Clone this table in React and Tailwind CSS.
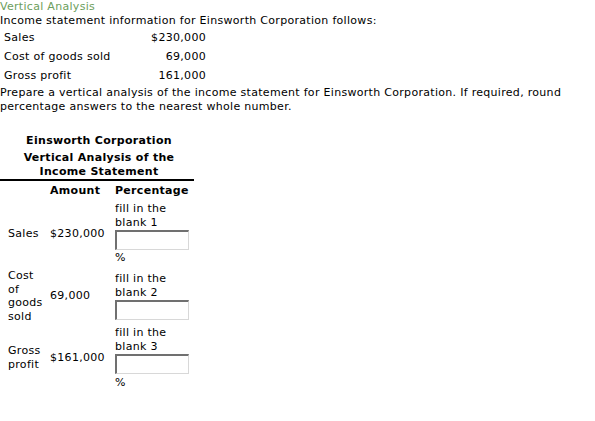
export default function App() {
  const font = { fontFamily: '"DejaVu Sans", Verdana, sans-serif' };
  const Input = () => (
    <div className="w-[74px] h-[20px] bg-white border border-t-[#707070] border-l-[#707070] border-b-[#d8d8d8] border-r-[#d8d8d8] border-t-2 border-l-2" />
  );
  return (
    <div className="w-[595px] h-[421px] bg-white text-black text-[11px] leading-[14px] tracking-[0.3px]" style={font}>
      <div className="text-[#6c9e5c]">Vertical Analysis</div>
      <div>Income statement information for Einsworth Corporation follows:</div>
      <div className="flex flex-col">
        <div className="flex h-[19px] items-center">
          <div className="pl-[4px] w-[120px]">Sales</div>
          <div className="w-[86px] text-right">$230,000</div>
        </div>
        <div className="flex h-[19px] items-center">
          <div className="pl-[4px] w-[120px]">Cost of goods sold</div>
          <div className="w-[86px] text-right">69,000</div>
        </div>
        <div className="flex h-[19px] items-center">
          <div className="pl-[4px] w-[120px]">Gross profit</div>
          <div className="w-[86px] text-right">161,000</div>
        </div>
      </div>
      <div className="w-[575px] mt-[1px]">
        Prepare a vertical analysis of the income statement for Einsworth Corporation. If required, round percentage answers to the nearest whole number.
      </div>
      <div className="w-[194px] mt-[20px]">
        <div className="font-bold text-center leading-[14px] pl-[4px]">
          <div className="mb-[3px]">Einsworth Corporation</div>
          <div>Vertical Analysis of the</div>
          <div>Income Statement</div>
        </div>
        <div className="h-[2px] bg-black" />
        <div className="flex font-bold mt-[3px]">
          <div className="w-[50px]" />
          <div className="w-[58px]">Amount</div>
          <div className="pl-[7px]">Percentage</div>
        </div>
        {/* Sales */}
        <div className="flex items-center mt-[4px]">
          <div className="w-[50px] pl-[8px]">Sales</div>
          <div className="w-[65px]">$230,000</div>
          <div className="flex flex-col">
            <div>fill in the</div>
            <div className="leading-[13px]">blank 1</div>
            <div className="mt-[1px]"><Input /></div>
            <div className="mt-[1px]">%</div>
          </div>
        </div>
        {/* Cost */}
        <div className="flex items-center mt-[4px]">
          <div className="w-[50px] pl-[8px] leading-[13.7px]">
            <div>Cost</div>
            <div>of</div>
            <div>goods</div>
            <div>sold</div>
          </div>
          <div className="w-[65px]">69,000</div>
          <div className="flex flex-col">
            <div>fill in the</div>
            <div>blank 2</div>
            <div className="mt-[0px]"><Input /></div>
          </div>
        </div>
        {/* Gross */}
        <div className="flex items-center mt-[2px]">
          <div className="w-[50px] pl-[8px]">
            <div>Gross</div>
            <div>profit</div>
          </div>
          <div className="w-[65px]">$161,000</div>
          <div className="flex flex-col">
            <div>fill in the</div>
            <div>blank 3</div>
            <div className="mt-[0px]"><Input /></div>
            <div className="mt-[2px]">%</div>
          </div>
        </div>
      </div>
    </div>
  );
}
